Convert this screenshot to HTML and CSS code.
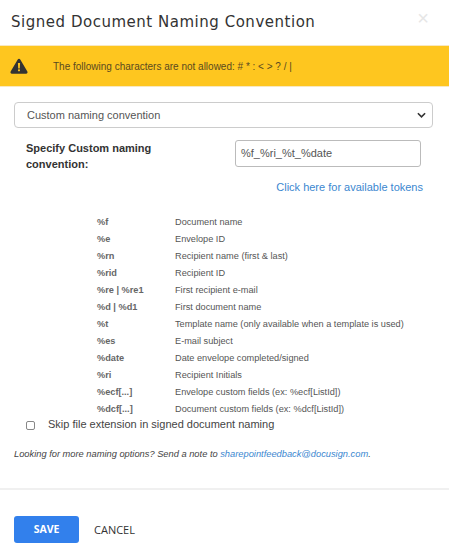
FILE: index.html
```html
<!DOCTYPE html>
<html lang="en">
<head>
    <meta charset="UTF-8">
    <title>Signed Document Naming Convention</title>
    <link rel="stylesheet" href="styles.css">
</head>
<body>
    <div class="header">
        <h1 class="title">Signed Document Naming Convention</h1>
        <div class="close-btn">&times;</div>
    </div>

    <div class="warning">
        <svg class="warning-icon" viewBox="0 0 20 18" width="18" height="16">
            <path fill="#333" fill-rule="evenodd" d="M10 .8c.6 0 1.100.3 1.400.8l8 13.700c.6 1.100-.1 2.400-1.400 2.400H2c-1.300 0-2-1.300-1.400-2.400l8-13.700C8.900 1.100 9.400.8 10 .8zM8.800 5.500l.3 6.300h1.800l.3-6.300H8.800zM10 12.700c-.7 0-1.200.5-1.200 1.200s.5 1.200 1.200 1.200 1.200-.5 1.200-1.200-.5-1.200-1.200-1.200z"/>
        </svg>
        <span class="warning-text">The following characters are not allowed: # * : &lt; &gt; ? / |</span>
    </div>

    <div class="content">
        <div class="select-box">
            <span>Custom naming convention</span>
            <svg viewBox="0 0 10 6" width="9" height="6">
                <path d="M1 1l4 4 4-4" fill="none" stroke="#333" stroke-width="1.800"/>
            </svg>
        </div>

        <div class="custom-row">
            <label class="custom-label">Specify Custom naming convention:</label>
            <div class="custom-input">%f_%ri_%t_%date</div>
        </div>

        <div class="tokens-link-row">
            <a class="tokens-link">Click here for available tokens</a>
        </div>

        <div class="tokens">
            <div class="token-row"><b>%f</b><span>Document name</span></div>
            <div class="token-row"><b>%e</b><span>Envelope ID</span></div>
            <div class="token-row"><b>%rn</b><span>Recipient name (first &amp; last)</span></div>
            <div class="token-row"><b>%rid</b><span>Recipient ID</span></div>
            <div class="token-row"><b>%re | %re1</b><span>First recipient e-mail</span></div>
            <div class="token-row"><b>%d | %d1</b><span>First document name</span></div>
            <div class="token-row"><b>%t</b><span>Template name (only available when a template is used)</span></div>
            <div class="token-row"><b>%es</b><span>E-mail subject</span></div>
            <div class="token-row"><b>%date</b><span>Date envelope completed/signed</span></div>
            <div class="token-row"><b>%ri</b><span>Recipient Initials</span></div>
            <div class="token-row"><b>%ecf[...]</b><span>Envelope custom fields (ex: %ecf[ListId])</span></div>
            <div class="token-row"><b>%dcf[...]</b><span>Document custom fields (ex: %dcf[ListId])</span></div>
        </div>

        <div class="skip-row">
            <span class="checkbox"></span>
            <span class="skip-text">Skip file extension in signed document naming</span>
        </div>

        <p class="note">Looking for more naming options? Send a note to <a>sharepointfeedback@docusign.com</a>.</p>
    </div>

    <div class="footer">
        <div class="save-btn">SAVE</div>
        <div class="cancel-btn">CANCEL</div>
    </div>
</body>
</html>
```

FILE: styles.css
```css
* {
    margin: 0;
    padding: 0;
    box-sizing: border-box;
}

body {
    background-color: #fff;
    color: #333;
    width: 449px;
    height: 557px;
    overflow: hidden;
    font-family: 'Liberation Sans', Arial, sans-serif;
}

.header {
    display: flex;
    justify-content: space-between;
    height: 46px;
    padding: 12px 20px 0 11px;
}

.title {
    font-family: 'DejaVu Sans', sans-serif;
    font-size: 15px;
    font-weight: 400;
    letter-spacing: 0.52px;
    line-height: 20px;
    color: #333;
}

.close-btn {
    font-size: 20px;
    line-height: 12px;
    color: #e6e6e6;
}

.warning {
    display: flex;
    align-items: center;
    height: 40px;
    padding-left: 10px;
    background-color: #fec61f;
    box-shadow: 0 -1px 0 #f8e8c0, 0 1px 0 #f8e8c0;
}

.warning-icon {
    flex-shrink: 0;
}

.warning-text {
    margin-left: 25px;
    font-size: 10px;
    color: #5a4a20;
}

.content {
    padding: 16px 0 0 14px;
}

.select-box {
    display: flex;
    justify-content: space-between;
    align-items: center;
    width: 419px;
    height: 26px;
    padding: 0 6px 0 12px;
    border: 1px solid #ccc;
    border-radius: 4px;
    font-size: 11px;
    color: #555;
}

.custom-row {
    display: flex;
    justify-content: space-between;
    width: 407px;
    margin-top: 12px;
    padding-left: 12px;
}

.custom-label {
    width: 140px;
    font-size: 11px;
    font-weight: 700;
    line-height: 16px;
    color: #333;
}

.custom-input {
    width: 186px;
    height: 27px;
    padding: 0 5px;
    border: 1px solid #bbb;
    border-radius: 3px;
    font-size: 11px;
    line-height: 24px;
    color: #555;
}

.tokens-link-row {
    width: 409px;
    margin-top: 5px;
    text-align: right;
}

.tokens-link {
    font-size: 11px;
    color: #3b87d0;
}

.tokens {
    margin-top: 19px;
    padding-left: 83px;
    font-size: 9.2px;
    color: #555;
}

.token-row {
    display: flex;
    height: 17px;
    line-height: 17px;
}

.token-row b {
    width: 78px;
    font-weight: 700;
    color: #666;
}

.skip-row {
    display: flex;
    align-items: center;
    padding-left: 12px;
}

.checkbox {
    width: 9px;
    height: 9px;
    margin-top: 3px;
    border: 1px solid #888;
    border-radius: 2px;
}

.skip-text {
    margin-left: 13px;
    font-size: 11px;
    color: #444;
}

.note {
    margin-top: 19px;
    font-size: 9.3px;
    font-style: italic;
    color: #444;
}

.note a {
    color: #3b87d0;
}

.footer {
    display: flex;
    align-items: center;
    height: 68px;
    margin-top: 29px;
    padding: 13px 0 0 14px;
    border-top: 2px solid #f0f0f0;
}

.save-btn {
    width: 65px;
    height: 27px;
    border-radius: 3px;
    background-color: #3280ec;
    color: #fff;
    font-family: 'Open Sans', sans-serif;
    font-size: 10.5px;
    font-weight: 700;
    line-height: 27px;
    text-align: center;
}

.cancel-btn {
    margin-left: 15px;
    font-family: 'Open Sans', sans-serif;
    font-size: 11px;
    color: #333;
}
```
